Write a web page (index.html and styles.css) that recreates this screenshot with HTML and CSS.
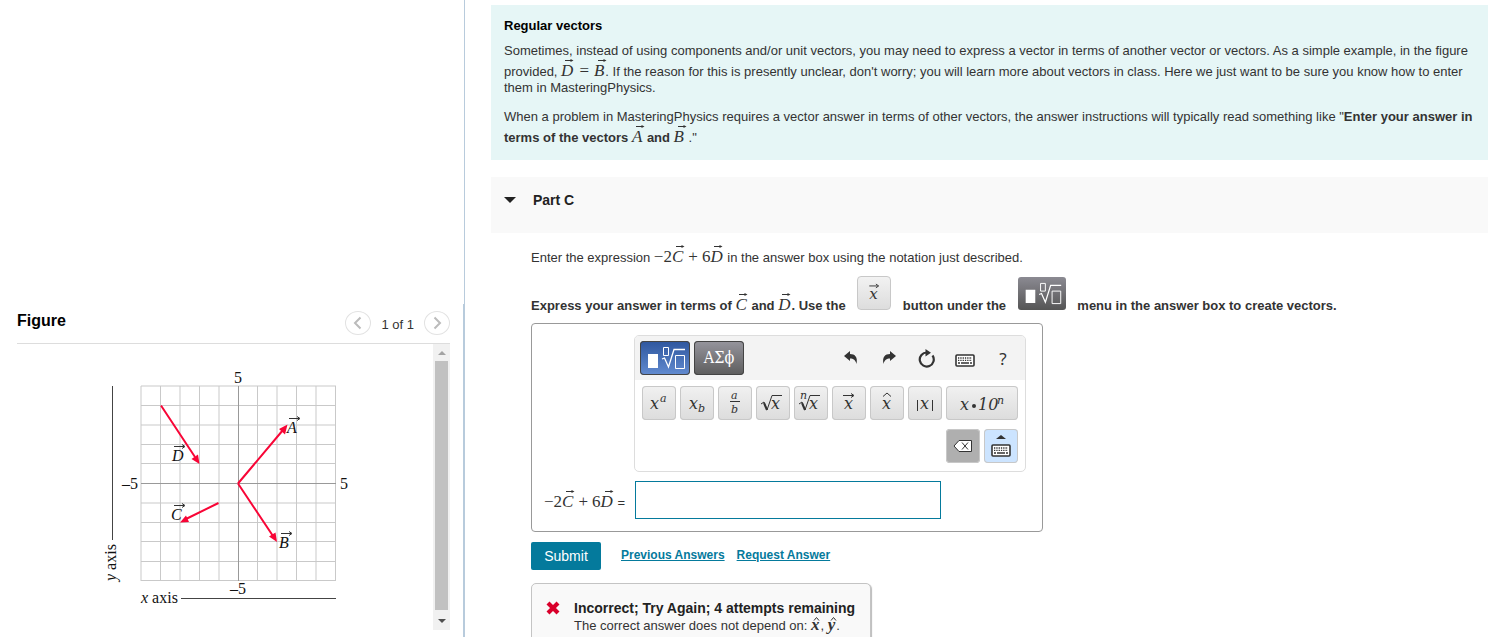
FILE: index.html
```html
<!DOCTYPE html>
<html lang="en">
<head>
<meta charset="utf-8">
<title>Regular vectors - Part C</title>
<link rel="stylesheet" href="styles.css">
</head>
<body>
<svg class="defs" aria-hidden="true">
  <symbol id="arrow" viewBox="0 0 9 5"><path d="M0 2.5H7" stroke="currentColor" stroke-width="1" fill="none"/><path d="M5.5 1L8.500 2.5L5.5 4Z" fill="currentColor"/></symbol>
  <symbol id="hat" viewBox="0 0 9 5"><path d="M2 4.5L4.5 1.5L7 4.5" stroke="currentColor" fill="none"/></symbol>
  <symbol id="template" viewBox="0 0 50 34"><path d="M8 13H18V27H8Z" fill="#fff"/><path d="M23.5 6.5H28.5V14.500H23.5ZM35.5 14.5H44.5V27.5H35.5Z" fill="none" stroke="#fff"/><path d="M22 18L24.500 17L28.500 26L34 8.500H45" fill="none" stroke="#fff" stroke-width="1.3"/></symbol>
  <symbol id="keyboard" viewBox="0 0 20 13"><rect x="1" y="1" width="18" height="11" rx="1" fill="#fff" stroke="#333" stroke-width="1.6"/><path d="M3 4H17M3 6.3H17" stroke="#333" stroke-width="1.3" stroke-dasharray="1.3 1"/><path d="M3 9H5M6 9H14M15 9H17" stroke="#333" stroke-width="1.4"/></symbol>
</svg>
<aside class="side">
  <section class="figure">
    <header class="figure-head">
      <h2>Figure</h2>
      <nav class="pager">
        <button type="button" class="round" aria-label="Previous figure"><svg width="10" height="14" viewBox="0 0 10 14"><path d="M7.5 1.5L2 7L7.5 12.5"/></svg></button>
        <span>1 of 1</span>
        <button type="button" class="round" aria-label="Next figure"><svg width="10" height="14" viewBox="0 0 10 14"><path d="M2.5 1.5L8 7L2.5 12.5"/></svg></button>
      </nav>
    </header>
    <div class="figure-body">
      <div class="canvas">
        <svg class="plot" width="270" height="250" viewBox="90 360 270 250" role="img" aria-label="Vectors A, B, C and D on a grid">
          <path class="grid" d="M141 386V581M160.500 386V581M180 386V581M199.500 386V581M219 386V581M257.500 386V581M277 386V581M296.500 386V581M316 386V581M335.500 386V581M141 386H336M141 405.500H336M141 425H336M141 444.500H336M141 463.500H336M141 503H336M141 522.500H336M141 541.500H336M141 561.500H336M141 580.500H336"/>
          <path class="mid" d="M238.500 386V581M141 483.500H336"/>
          <path class="rule" d="M112.500 386V540M181 598.500H336"/>
          <path class="vector" d="M238 483.500L283 430M238 483.500L273 536M218.500 503L186 519M161 405.500L195 457"/>
          <path class="tip" d="M287.500 424.500L279 429L285 434.500ZM277 542L269 536.500L275.500 532.500ZM180 522.500L186 515.500L189 522ZM199.500 464L191.500 459L198 454.500Z"/>
          <path class="over" d="M289 418.500H299M297 416.500L300 418.500L297 420.500M281 533.500H291M289 531.500L292 533.500L289 535.500M174 505.500H184M182 503.500L185 505.500L182 507.500M174 446.500H184M182 444.500L185 446.500L182 448.500"/>
          <g class="label"><text x="234" y="383">5</text><text x="340" y="489">5</text><text x="122" y="489">–5</text><text x="230" y="594">–5</text>
          <text x="141" y="603"><tspan class="it">x</tspan> axis</text><text transform="translate(116 581) rotate(-90)"><tspan class="it">y</tspan> axis</text>
          <text class="it" x="287" y="433">A</text><text class="it" x="279" y="548">B</text><text class="it" x="171" y="520">C</text><text class="it" x="172" y="461">D</text></g>
        </svg>
      </div>
      <div class="scrollbar"><i class="up"></i><i class="thumb"></i><i class="down"></i></div>
    </div>
  </section>
</aside>
<main class="main">
  <section class="info">
    <h3>Regular vectors</h3>
    <p>Sometimes, instead of using components and/or unit vectors, you may need to express a vector in terms of another vector or vectors. As a simple example, in the figure provided, <span class="math"><i class="vec">D<svg><use href="#arrow"/></svg></i><span class="eq">=</span><i class="vec">B<svg><use href="#arrow"/></svg></i></span>. If the reason for this is presently unclear, don't worry; you will learn more about vectors in class. Here we just want to be sure you know how to enter them in MasteringPhysics.</p>
    <p>When a problem in MasteringPhysics requires a vector answer in terms of other vectors, the answer instructions will typically read something like "<b>Enter your answer in terms of the vectors <span class="math"><i class="vec">A<svg><use href="#arrow"/></svg></i></span> and <span class="math"><i class="vec">B<svg><use href="#arrow"/></svg></i></span></b> ."</p>
  </section>
  <header class="part-head"><svg width="12" height="6" viewBox="0 0 12 6"><path d="M0 0H12L6 6Z" fill="#222"/></svg><h3>Part C</h3></header>
  <div class="part">
    <p>Enter the expression <span class="math">−2<i class="vec">C<svg><use href="#arrow"/></svg></i><span class="op">+</span>6<i class="vec">D<svg><use href="#arrow"/></svg></i></span> in the answer box using the notation just described.</p>
    <p class="express">Express your answer in terms of <span class="math"><i class="vec">C<svg><use href="#arrow"/></svg></i></span> and <span class="math"><i class="vec">D<svg><use href="#arrow"/></svg></i></span>. Use the
      <svg class="inline-key light" width="34" height="34" viewBox="0 0 34 34"><text class="glyph" x="12" y="23">x</text><path d="M12 9.500H21M19 7.500L22 9.500L19 11.500" fill="none" stroke="#333"/></svg>
      button under the
      <svg class="inline-key dark" width="48" height="33" viewBox="0 0 50 34"><use href="#template"/></svg>
      menu in the answer box to create vectors.</p>
    <form class="answer">
      <div class="pad">
        <div class="pad-head">
          <button type="button" class="tab active" aria-label="Templates"><svg width="50" height="34"><use href="#template"/></svg></button>
          <button type="button" class="tab">ΑΣϕ</button>
          <div class="tools">
            <button type="button" aria-label="Undo"><svg width="14" height="14" viewBox="0 0 14 14"><path d="M0 5L6 0V3C11 3 14 6 12.500 13C11.500 9 9.500 7.500 6 7.500V10Z" fill="#333"/></svg></button>
            <button type="button" aria-label="Redo"><svg width="14" height="14" viewBox="0 0 14 14"><path d="M14 5L8 0V3C3 3 0 6 1.500 13C2.500 9 4.500 7.500 8 7.500V10Z" fill="#333"/></svg></button>
            <button type="button" aria-label="Reset"><svg width="18" height="19" viewBox="0 0 18 19"><path d="M9 3.500A7 7 0 1 0 14.500 6.500" fill="none" stroke="#333" stroke-width="2.200"/><path d="M7.500 0L13 3.800L7.500 7.500Z" fill="#333"/></svg></button>
            <button type="button" class="low" aria-label="Keyboard shortcuts"><svg width="20" height="13"><use href="#keyboard"/></svg></button>
            <button type="button" class="help" aria-label="Help">?</button>
          </div>
        </div>
        <div class="keys">
          <button type="button" aria-label="Superscript"><svg width="34" height="34"><text class="glyph" x="8" y="23">x</text><text class="glyph small" x="18" y="16">a</text></svg></button>
          <button type="button" aria-label="Subscript"><svg width="34" height="34"><text class="glyph" x="9" y="23">x</text><text class="glyph small" x="18" y="26">b</text></svg></button>
          <button type="button" aria-label="Fraction"><svg width="34" height="34"><text class="glyph small" x="13" y="13">a</text><path d="M12 15.500H22"/><text class="glyph small" x="13" y="27">b</text></svg></button>
          <button type="button" aria-label="Square root"><svg width="34" height="34"><path d="M5 18L8 16L11 24L16 9.500H26"/><path class="heavy" d="M8 17L11 24"/><text class="glyph" x="15" y="23">x</text></svg></button>
          <button type="button" aria-label="Nth root"><svg width="34" height="34"><path d="M5 18L8 16L11 24L16 9.500H26"/><path class="heavy" d="M8 17L11 24"/><text class="glyph small" x="6" y="13">n</text><text class="glyph" x="15" y="23">x</text></svg></button>
          <button type="button" aria-label="Vector"><svg width="34" height="34"><path d="M11 9.500H21M19 7.500L22 9.500L19 11.500"/><text class="glyph" x="12" y="23">x</text></svg></button>
          <button type="button" aria-label="Unit vector"><svg width="34" height="34"><path d="M13 10.500L17 7L21 10.500"/><text class="glyph" x="12" y="23">x</text></svg></button>
          <button type="button" aria-label="Absolute value"><svg width="34" height="34"><path d="M9.500 14V25M24.500 14V25"/><text class="glyph" x="12" y="23">x</text></svg></button>
          <button type="button" class="wide" aria-label="Scientific notation"><svg width="72" height="34"><text class="glyph" x="14" y="24">x</text><circle cx="28" cy="20" r="2" fill="#333"/><text class="glyph" x="32" y="24">10</text><text class="glyph small" x="51" y="18">n</text></svg></button>
          <button type="button" class="erase" aria-label="Backspace"><svg width="20" height="12" viewBox="0 0 20 12"><path d="M1 6L6 .5H18.500V11.500H6Z" fill="#fff"/><path d="M9 2.500L15 9.500M15 2.500L9 9.500"/></svg></button>
          <button type="button" class="toggle" aria-label="Hide keypad"><svg width="10" height="4" viewBox="0 0 10 4"><path d="M0 4L5 0L10 4Z"/></svg><svg width="20" height="13"><use href="#keyboard"/></svg></button>
        </div>
      </div>
      <label for="answer"><span class="math">−2<i class="vec">C<svg><use href="#arrow"/></svg></i><span class="op">+</span>6<i class="vec">D<svg><use href="#arrow"/></svg></i></span> =</label>
      <input id="answer" type="text">
    </form>
    <div class="actions"><button type="button" class="submit">Submit</button><a href="#previous">Previous Answers</a><a href="#request">Request Answer</a></div>
    <section class="feedback">
      <svg width="14" height="14" viewBox="0 0 14 14"><path d="M2 2L12 12M12 2L2 12" stroke="#d9002b" stroke-width="4.200"/></svg>
      <div><h4>Incorrect; Try Again; 4 attempts remaining</h4>
      <p>The correct answer does not depend on: <span class="math"><i class="vec low-hat"><b>x</b><svg><use href="#hat"/></svg></i></span>, <span class="math"><i class="vec low-hat"><b>y</b><svg><use href="#hat"/></svg></i></span>.</p></div>
    </section>
  </div>
</main>
</body>
</html>
```
FILE: styles.css
```css
* { box-sizing: border-box; }
body {
  margin: 0;
  display: flex;
  height: 100vh;
  overflow: hidden;
  background: #fff;
  color: #333;
  font: 13px/16px "Liberation Sans", Arial, sans-serif;
}
h2, h3, h4, p { margin: 0; }
button { padding: 0; border: 0; background: none; color: inherit; font: inherit; cursor: pointer; }
.defs { position: absolute; width: 0; height: 0; }

.side { flex: 0 0 465px; display: flex; flex-direction: column; padding-top: 304px; border-right: 1px solid #b8cbdc; }
.figure { flex: 1; display: flex; flex-direction: column; padding: 0 13px 7px 17px; border-right: 1px solid #b8cbdc; }
.figure-head { display: flex; justify-content: space-between; align-items: center; height: 40px; border-bottom: 1px solid #ddd; }
.figure-head h2 { color: #000; font-size: 16px; line-height: 20px; padding-bottom: 6px; }
.pager { display: flex; align-items: center; gap: 10px; padding-bottom: 1px; }
.pager span { padding-top: 3px; }
.round { display: flex; align-items: center; justify-content: center; width: 26px; height: 24px; border: 1px solid #e2e2e2; border-radius: 50%; }
.round path { fill: none; stroke: #bbb; stroke-width: 2; }
.figure-body { flex: 1; display: flex; }
.canvas { flex: 1; padding: 16px 0 0 73px; }
.plot { display: block; }
.plot path { fill: none; }
.plot .grid { stroke: #c9c9c9; }
.plot .mid { stroke: #999; }
.plot .rule { stroke: #444; }
.plot .vector { stroke: #f80536; stroke-width: 2; }
.plot .tip { fill: #f80536; }
.plot .over { stroke: #333; stroke-width: 1; }
.label { fill: #111; font: 16px "Liberation Serif", serif; }
.it { font-style: italic; }
.scrollbar { width: 17px; display: flex; flex-direction: column; align-items: center; justify-content: space-between; padding: 7px 0; background: #f1f1f1; }
.thumb { flex: 1; width: 13px; margin: 6px 0 9px; background: #c1c1c1; }
.up { border: 4px solid transparent; border-top: 0; border-bottom-color: #a3a3a3; }
.down { border: 4px solid transparent; border-bottom: 0; border-top-color: #505050; }

.main { flex: 1; min-width: 0; padding: 5px 0 0 26px; }
.info { padding: 13px 13px 14px; background: #e6f6f6; }
.info h3 { color: #000; font-size: 13px; margin-bottom: 9px; }
.info p + p { margin-top: 13px; }
.math { font: 17px/16px "Liberation Serif", serif; white-space: nowrap; }
.vec { position: relative; display: inline-block; padding-top: 4px; margin-right: 1px; font-style: italic; }
.vec svg { position: absolute; top: -1px; left: 4px; width: 9px; height: 5px; }
.vec.low-hat { padding-top: 1px; }
.low-hat svg { top: 0; left: 1px; }
.eq { margin: 0 5px; }
.op { margin: 0 4px; }

.part-head { display: flex; align-items: center; gap: 17px; margin-top: 17px; padding: 15px 13px 25px; background: #f9f9f9; }
.part-head h3 { color: #222; font-size: 14px; }
.part { padding: 12px 0 0 40px; }
.express { margin-top: 10px; font-weight: bold; }
.inline-key { margin: 0 8px; border-radius: 4px; }
.light { border: 1px solid #c8c8c8; background: linear-gradient(#f2f2f2, #ddd); }
.dark { background: linear-gradient(#8b8a92, #555); border-radius: 3px; }

.answer { display: grid; grid-template-columns: 93px 392px; column-gap: 9px; row-gap: 9px; width: 512px; margin-top: 9px; padding: 11px 0 12px; border: 1px solid #999; border-radius: 4px; }
.answer label { align-self: center; text-align: right; }
.answer input { width: 306px; height: 38px; margin-left: 1px; padding: 0 8px; border: 1px solid #047a9c; font: inherit; }
.pad { grid-column: 2; border: 1px solid #ddd; border-radius: 5px; overflow: hidden; }
.pad-head { display: flex; align-items: center; gap: 4px; height: 44px; padding: 0 3px 0 5px; background: #f3f3f3; }
.tab { width: 50px; height: 34px; border-radius: 4px; box-shadow: inset 0 0 0 1px #444; background: linear-gradient(#96959d, #5d5d5d); color: #fff; font: 16px/32px "DejaVu Serif Condensed", "DejaVu Serif", serif; }
.tab svg { display: block; }
.active { background: linear-gradient(#2e569e, #628bd0); }
.tools { display: flex; margin-left: auto; }
.tools button { display: flex; align-items: center; justify-content: center; width: 38px; height: 34px; }
.tools .low { padding-top: 4px; }
.tools .help { font: 17px "Noto Sans", sans-serif; }
.keys { display: grid; grid-template-columns: repeat(10, 34px); gap: 9px 4px; padding: 6px 7px 8px; }
.keys button { display: flex; flex-direction: column; align-items: center; justify-content: center; gap: 5px; height: 34px; border-radius: 4px; box-shadow: inset 0 0 0 1px #c8c8c8; background: linear-gradient(#f1f1f1, #dcdcdc); }
.keys path { fill: none; stroke: #333; stroke-width: 1; }
.keys .heavy { stroke-width: 2; }
.keys .wide { grid-column: span 2; }
.keys .erase { grid-column: 9; background: #afafaf; }
.keys .erase path:first-child { fill: #fff; }
.keys .toggle { background: #cce4ff; }
.keys .toggle svg:first-child path { fill: #333; stroke: none; }
.glyph { fill: #333; font: italic 16px "DejaVu Serif", serif; }
.small { font-size: 11px; }

.actions { display: flex; align-items: center; margin-top: 10px; }
.submit { width: 70px; height: 28px; margin-right: 20px; border-radius: 2px; background: #047a9c; color: #fff; font-size: 14px; }
.actions a { margin-right: 12px; padding-bottom: 3px; color: #047a9c; font-size: 12px; font-weight: bold; }
.feedback { display: flex; gap: 14px; width: 340px; margin-top: 13px; padding: 16px 12px 16px 14px; border: 1px solid #c4c4c4; border-radius: 5px; box-shadow: 1px 1px 1px #bbb; background: #f9f9f9; }
.feedback > svg { flex: none; margin-top: 1px; }
.feedback > div { white-space: nowrap; }
.feedback h4 { color: #222; font-size: 14px; }
```
